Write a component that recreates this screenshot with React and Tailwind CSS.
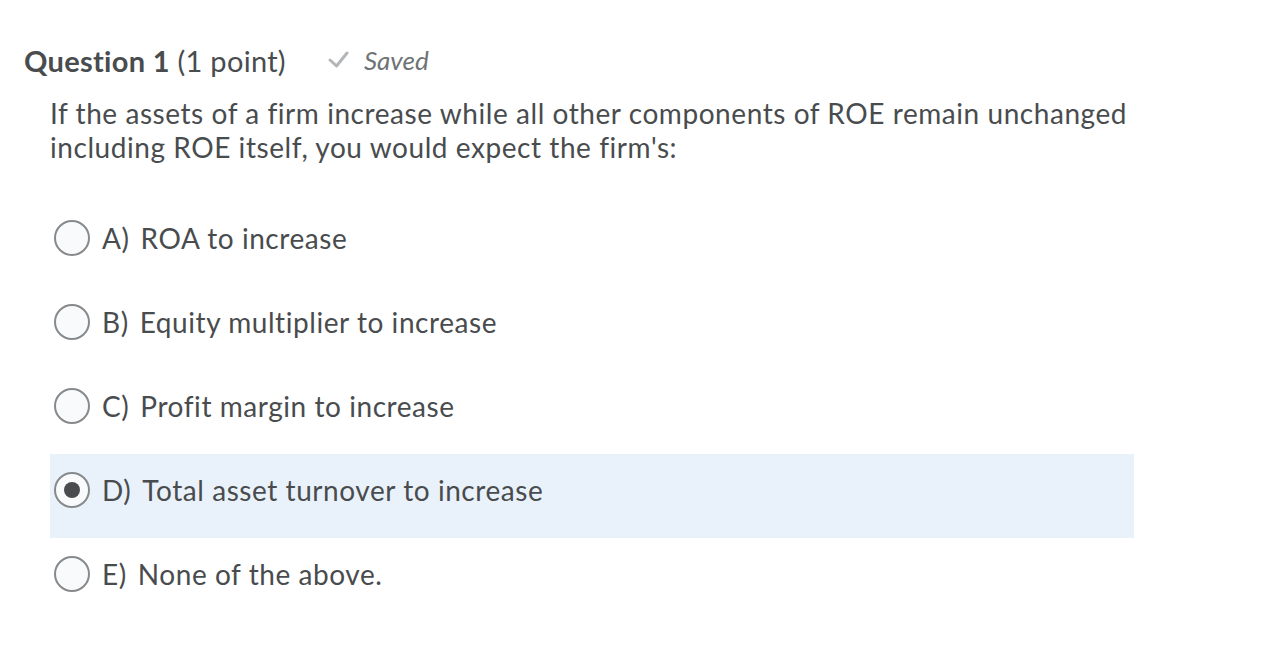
import { useState } from 'react';

const options = [
  { id: 'A', letter: 'A)', label: 'ROA to increase' },
  { id: 'B', letter: 'B)', label: 'Equity multiplier to increase' },
  { id: 'C', letter: 'C)', label: 'Profit margin to increase' },
  { id: 'D', letter: 'D)', label: 'Total asset turnover to increase' },
  { id: 'E', letter: 'E)', label: 'None of the above.' },
];

const Radio = ({ checked }) => (
  <span className="w-[36px] h-[36px] rounded-full border-2 border-[#878a8c] bg-[#f9fafb] flex items-center justify-center shrink-0">
    {checked && <span className="w-[16px] h-[16px] rounded-full bg-[#494c4e]" />}
  </span>
);

export default function App() {
  const [selected, setSelected] = useState('D');

  return (
    <div
      className="w-[1266px] h-[648px] bg-white text-[#494c4e] pt-[40px]"
      style={{ fontFamily: 'Lato, "Open Sans", sans-serif', fontVariantLigatures: 'none' }}
    >
      {/* Заголовок */}
      <div className="flex items-center pl-[24px] h-[40px]">
        <h2 className="text-[29px] leading-none tracking-[0.01em]">
          <span className="font-bold">Question 1</span> (1 point)
        </h2>
        <span className="flex items-center ml-[42px] text-[#6e7376] text-[26px] italic">
          <svg className="w-[21px] h-[17px] mr-[15px] -mt-[2px]" viewBox="0 0 21 17" fill="none" stroke="#b2b6b9" strokeWidth={3} strokeLinecap="round" strokeLinejoin="round">
            <path d="M2 9l6.5 6L19 2" />
          </svg>
          Saved
        </span>
      </div>

      <p className="pl-[50px] pr-[100px] mt-[16px] text-[28px] leading-[34px] tracking-[0.02em]">
        If the assets of a firm increase while all other components of ROE remain unchanged including ROE itself, you would expect the firm's:
      </p>

      <div className="mt-[38px] ml-[50px] w-[1084px]">
        {options.map(o => (
          <label
            key={o.id}
            onClick={() => setSelected(o.id)}
            className={`flex items-center h-[84px] pl-[4px] pt-[18px] pb-[30px] gap-[12px] cursor-pointer text-[28px] leading-[36px] tracking-[0.02em] ${selected === o.id ? 'bg-[#e9f2fb]' : ''}`}
          >
            <Radio checked={selected === o.id} />
            <span>
              <span className="mr-[11px]">{o.letter}</span>
              {o.label}
            </span>
          </label>
        ))}
      </div>
    </div>
  );
}
